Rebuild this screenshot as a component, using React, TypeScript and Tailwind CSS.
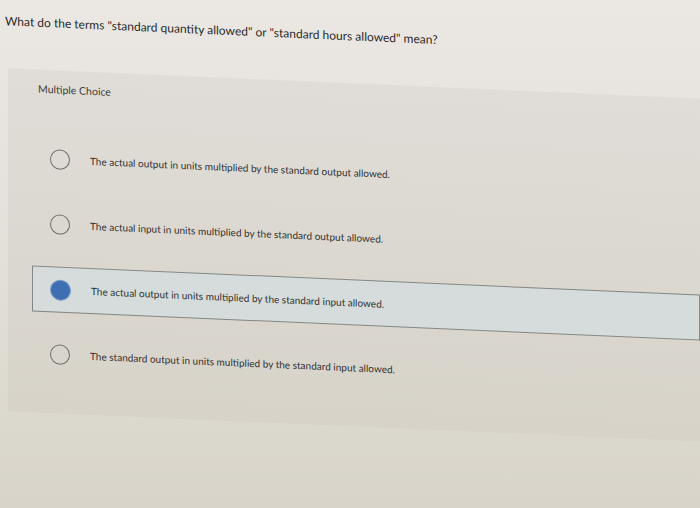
import React from 'react';

const choices = [
    { id: 'a', text: 'The actual output in units multiplied by the standard output allowed.' },
    { id: 'b', text: 'The actual input in units multiplied by the standard output allowed.' },
    { id: 'c', text: 'The actual output in units multiplied by the standard input allowed.' },
    { id: 'd', text: 'The standard output in units multiplied by the standard input allowed.' },
];

const selectedId = 'c';

function Radio({ checked }: { checked: boolean }) {
    if (checked) {
        return <span className="block h-[21px] w-[21px] shrink-0 rounded-full border border-[#7f9cc4] bg-[#3f6fb3]"></span>;
    }
    return <span className="block h-[20px] w-[20px] shrink-0 rounded-full border-[1.5px] border-[#6f6f6c]"></span>;
}

export default function App() {
    return (
        <div className="h-[508px] w-[700px] overflow-hidden bg-gradient-to-b from-[#ebe8e4] via-[#e3e0da] to-[#d8d4c9] font-['Lato','Liberation_Sans',sans-serif]">
            <div className="origin-top-left skew-y-[2.5deg]">
                <h1 className="pl-[5px] pt-[13px] text-[12px] leading-4 text-[#2b2b2a]">
                    What do the terms "standard quantity allowed" or "standard hours allowed" mean?
                </h1>

                <section className="ml-2 mt-[39px] bg-gradient-to-b from-[#e0ddd8] to-[#d7d3c9] pb-[36px] pt-[13px]">
                    <p className="pl-[30px] text-[10.5px] leading-3 text-[#3d3d3b]">Multiple Choice</p>

                    <ul className="mt-[41px] flex flex-col gap-[19px]">
                        {choices.map((choice) => {
                            const checked = choice.id === selectedId;
                            return (
                                <li
                                    key={choice.id}
                                    className={
                                        checked
                                            ? 'ml-6 flex h-[46px] items-center gap-5 border border-[#858784] bg-[#d5dcdb] pl-[17px]'
                                            : 'ml-6 flex h-[46px] items-center gap-5 border border-transparent pl-[17px]'
                                    }
                                >
                                    <Radio checked={checked} />
                                    <span className="text-[10px] text-[#333331]">{choice.text}</span>
                                </li>
                            );
                        })}
                    </ul>
                </section>
            </div>
        </div>
    );
}
